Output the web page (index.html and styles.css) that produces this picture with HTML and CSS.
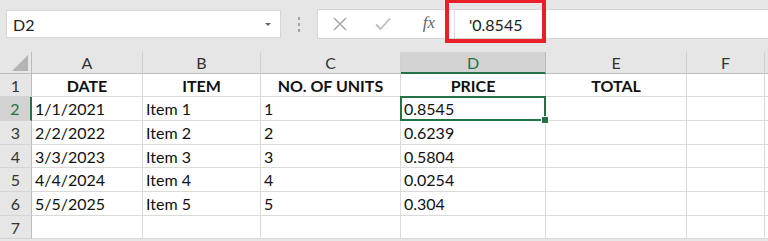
FILE: index.html
```html
<!DOCTYPE html>
<html>
<head>
    <title>Sheet</title>
    <link rel="stylesheet" href="styles.css">
</head>
<body>
    <div class="toolbar">
        <div class="name-box">
            <span>D2</span>
            <span class="caret"></span>
        </div>
        <div class="grip"><i></i><i></i><i></i></div>
        <div class="formula-panel">
            <div class="btn">
                <svg width="14" height="14" viewBox="0 0 14 14"><path d="M1 1 L13 13 M13 1 L1 13" stroke="#a9a9a9" stroke-width="1.6" fill="none"/></svg>
            </div>
            <div class="btn">
                <svg width="16" height="14" viewBox="0 0 16 14"><path d="M1 7.5 L5.5 12 L15 1.5" stroke="#bdbdbd" stroke-width="1.8" fill="none"/></svg>
            </div>
            <div class="btn fx">fx</div>
            <div class="formula-input">'0.8545</div>
            <div class="highlight"></div>
        </div>
    </div>

    <div class="sheet">
        <div class="hd corner"><span class="tri"></span></div>
        <div class="hd">A</div>
        <div class="hd">B</div>
        <div class="hd">C</div>
        <div class="hd active-col">D</div>
        <div class="hd">E</div>
        <div class="hd">F</div>
        <div class="hd edge"></div>

        <div class="rh">1</div>
        <div class="c b">DATE</div>
        <div class="c b">ITEM</div>
        <div class="c b">NO. OF UNITS</div>
        <div class="c b">PRICE</div>
        <div class="c b">TOTAL</div>
        <div class="c"></div>
        <div class="c edge"></div>

        <div class="rh active-row">2</div>
        <div class="c">1/1/2021</div>
        <div class="c">Item 1</div>
        <div class="c">1</div>
        <div class="c selected">0.8545<span class="handle"></span></div>
        <div class="c"></div>
        <div class="c"></div>
        <div class="c edge"></div>

        <div class="rh">3</div>
        <div class="c">2/2/2022</div>
        <div class="c">Item 2</div>
        <div class="c">2</div>
        <div class="c">0.6239</div>
        <div class="c"></div>
        <div class="c"></div>
        <div class="c edge"></div>

        <div class="rh">4</div>
        <div class="c">3/3/2023</div>
        <div class="c">Item 3</div>
        <div class="c">3</div>
        <div class="c">0.5804</div>
        <div class="c"></div>
        <div class="c"></div>
        <div class="c edge"></div>

        <div class="rh">5</div>
        <div class="c">4/4/2024</div>
        <div class="c">Item 4</div>
        <div class="c">4</div>
        <div class="c">0.0254</div>
        <div class="c"></div>
        <div class="c"></div>
        <div class="c edge"></div>

        <div class="rh">6</div>
        <div class="c">5/5/2025</div>
        <div class="c">Item 5</div>
        <div class="c">5</div>
        <div class="c">0.304</div>
        <div class="c"></div>
        <div class="c"></div>
        <div class="c edge"></div>

        <div class="rh">7</div>
        <div class="c"></div>
        <div class="c"></div>
        <div class="c"></div>
        <div class="c"></div>
        <div class="c"></div>
        <div class="c"></div>
        <div class="c edge"></div>
    </div>
</body>
</html>
```

FILE: styles.css
```css
body {
    margin: 0;
    background-color: #e6e6e6;
    font-family: Lato, 'Liberation Sans', sans-serif;
    font-size: 16px;
    color: #222;
    overflow: hidden;
}
.toolbar {
    display: flex;
    align-items: center;
    height: 52px;
    padding-top: 0;
}
.name-box {
    display: flex;
    align-items: center;
    justify-content: space-between;
    box-sizing: border-box;
    width: 275px;
    height: 28px;
    margin-left: 6px;
    margin-top: -4px;
    padding: 0 9px 0 6px;
    background-color: white;
    border: 1px solid #d6d6d6;
}
.caret {
    width: 0;
    height: 0;
    border-left: 3px solid transparent;
    border-right: 3px solid transparent;
    border-top: 3px solid #666;
}
.grip {
    display: flex;
    flex-direction: column;
    gap: 3px;
    width: 36px;
    align-items: center;
    margin-top: -4px;
}
.grip i {
    width: 2px;
    height: 3px;
    background-color: #a3a3a3;
}
.formula-panel {
    position: relative;
    flex: 1;
    display: flex;
    align-items: center;
    height: 28px;
    margin-top: -4px;
    background-color: white;
    border: 1px solid #d6d6d6;
    border-right: none;
}
.btn {
    display: flex;
    align-items: center;
    justify-content: center;
    width: 42px;
}
.btn:first-child {
    width: 44px;
}
.fx {
    width: 50px;
    font-family: 'Liberation Serif', serif;
    font-style: italic;
    font-size: 17px;
    color: #666;
    padding-bottom: 3px;
}
.formula-input {
    flex: 1;
    align-self: stretch;
    display: flex;
    align-items: center;
    padding-left: 14px;
    border-left: 1px solid #dcdcdc;
    font-size: 16px;
}
.highlight {
    position: absolute;
    left: 127px;
    top: -11px;
    width: 93px;
    height: 36px;
    border: 4px solid #e8202a;
}
.sheet {
    display: grid;
    grid-template-columns: 32px 111px 118px 140px 145px 141px 78px 1fr;
    grid-template-rows: 22px 23px 24px 24px 23px 24px 24px 23px;
    background-color: white;
}
.hd {
    display: flex;
    align-items: center;
    justify-content: center;
    background-color: #e6e6e6;
    border-right: 1px solid #cfcfcf;
    border-bottom: 1px solid #bdbdbd;
    color: #333;
    box-sizing: border-box;
}
.corner {
    position: relative;
    border-right: 1px solid #bdbdbd;
}
.tri {
    position: absolute;
    right: 3px;
    bottom: 2px;
    width: 0;
    height: 0;
    border-left: 16px solid transparent;
    border-bottom: 16px solid #b4b4b4;
}
.active-col {
    background-color: #d2d2d2;
    color: #217346;
    border-bottom: 2px solid #217346;
    border-right-color: #bdbdbd;
}
.edge {
    border-right: none;
}
.rh {
    display: flex;
    align-items: center;
    justify-content: center;
    background-color: #e6e6e6;
    border-right: 1px solid #bdbdbd;
    border-bottom: 1px solid #d4d4d4;
    color: #333;
    box-sizing: border-box;
}
.active-row {
    background-color: #d2d2d2;
    color: #217346;
    border-right: 2px solid #217346;
}
.c {
    display: flex;
    align-items: center;
    padding-left: 3px;
    border-right: 1px solid #dadada;
    border-bottom: 1px solid #dadada;
    box-sizing: border-box;
    white-space: nowrap;
    color: #111;
}
.b {
    justify-content: center;
    padding-left: 0;
    font-weight: bold;
}
.selected {
    position: relative;
    border: 2px solid #217346;
    margin: -1px 0 0 -1px;
    padding-left: 2px;
}
.handle {
    position: absolute;
    right: -5px;
    bottom: -5px;
    width: 6px;
    height: 6px;
    background-color: #217346;
    border: 1px solid white;
}
```
